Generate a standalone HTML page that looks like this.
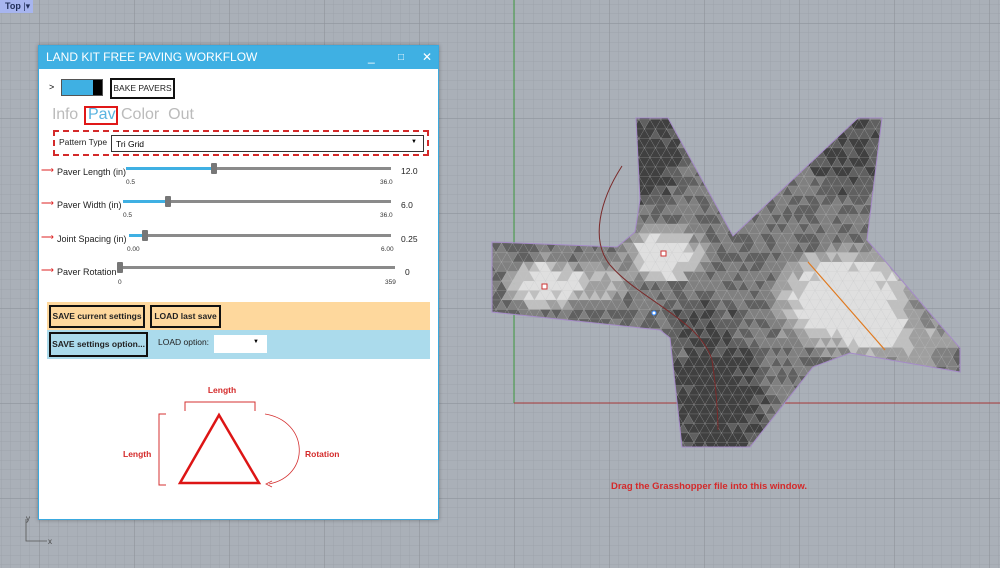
<!DOCTYPE html>
<html><head><meta charset="utf-8"><style>
*{margin:0;padding:0;box-sizing:border-box}
body{width:1000px;height:568px;overflow:hidden;position:relative;font-family:"Liberation Sans",sans-serif;background:#aab0b8}
.abs{position:absolute}
#dlg{left:38px;top:45px;width:401px;height:475px;background:#fff;border:1px solid #3aa9df;box-shadow:0 0 4px rgba(0,0,0,.3)}
#tb{left:0;top:0;width:399px;height:23px;background:#3fb0e3;color:#fff;font-size:12px;line-height:23px;padding-left:7px}
.lbl{font-size:9px;color:#222}
.sm{font-size:6.5px;color:#333}
.track{height:3px;background:#8a8a8a}
.thumb{width:6px;height:11px;background:#777;border-radius:1px}
.arrow{font-size:9px;color:#d22;}
.btn{border:2px solid #111;font-size:8.5px;font-weight:bold;color:#222;text-align:center;white-space:nowrap}
</style></head><body>
<svg class="abs" style="left:0;top:0" width="1000" height="568">
<defs>
<pattern id="mn" x="514" y="403" width="9.5" height="9.5" patternUnits="userSpaceOnUse"><path d="M0 0H9.5M0 0V9.5" stroke="#9ea3ab" stroke-width="1" fill="none"/></pattern>
<pattern id="mj" x="514" y="403" width="95" height="95" patternUnits="userSpaceOnUse"><path d="M0 0H95M0 0V95" stroke="#8e939b" stroke-width="1.2" fill="none"/></pattern>
<clipPath id="star"><path d="M636 118L668 118L733 236L858 118L882 118L867 240L960 348L960 372L850 353L813 367L750 447L682 447L670 338L660 330L492 312L492 242L617 247L635 232L640 200Z"/></clipPath>
</defs>
<rect width="1000" height="568" fill="url(#mn)"/>
<rect width="1000" height="568" fill="url(#mj)"/>
<line x1="514" y1="0" x2="514" y2="403" stroke="#3e9a3e" stroke-width="1"/>
<line x1="514" y1="403" x2="1000" y2="403" stroke="#a83a3a" stroke-width="1"/>
<g clip-path="url(#star)" id="tris"><rect x="480" y="100" width="500" height="360" fill="#6a6a6a"/></g>
<path d="M636 118L668 118L733 236L858 118L882 118L867 240L960 348L960 372L850 353L813 367L750 447L682 447L670 338L660 330L492 312L492 242L617 247L635 232L640 200Z" fill="none" stroke="#a58bc8" stroke-width="1"/>
<path d="M622 166C600 200 590 240 610 265C640 300 700 320 712 360C718 400 718 430 718 430" fill="none" stroke="#7a2a2a" stroke-width="1"/>
<line x1="808" y1="262" x2="885" y2="350" stroke="#e07a20" stroke-width="1.2"/>
<rect x="542" y="284" width="5" height="5" fill="#fff" stroke="#c33"/>
<rect x="661" y="251" width="5" height="5" fill="#fff" stroke="#c33"/>
<circle cx="654" cy="313" r="2" fill="#fff" stroke="#38f"/>
<path d="M26 519V541H47" stroke="#555" fill="none" stroke-width=".8"/>
<text x="26" y="521" font-size="8" fill="#444" font-family="Liberation Sans">y</text>
<text x="48" y="544" font-size="8" fill="#444" font-family="Liberation Sans">x</text>
</svg>
<script>
(function(){
var g=document.getElementById('tris'),s='',seed=7;
function r(){seed=(seed*16807)%2147483647;return seed/2147483647;}
function blob(x,y,cx,cy,rx,ry){var d=((x-cx)/rx)*((x-cx)/rx)+((y-cy)/ry)*((y-cy)/ry);return Math.max(0,1-d);}
var w=11,h=9.5;
for(var j=0;j<38;j++){var y=110+j*h;for(var i=-1;i<47;i++){
 for(var k=0;k<2;k++){
  var off=(j%2)*w/2, x=485+i*w+off+k*w/2;
  var cx=x+w/2, cy=y+h/2;
  var v=0.45;
  v-=0.22*blob(cx,cy,650,150,40,70);
  v-=0.18*blob(cx,cy,850,150,60,60);
  v-=0.25*blob(cx,cy,715,400,60,80);
  v-=0.12*blob(cx,cy,700,320,50,30);
  v+=0.5*blob(cx,cy,545,285,45,30);
  v+=0.55*blob(cx,cy,665,255,45,32);
  v+=0.6*blob(cx,cy,845,300,80,60);
  v+=0.25*blob(cx,cy,900,340,60,30);
  v+=0.22*blob(cx,cy,600,280,40,30);
  v+=(r()-0.5)*0.18;
  v=Math.round(Math.max(0.22,Math.min(0.9,v))*8)/8;
  var c=Math.round(v*255);
  var p=k==0?(x+','+(y+h)+' '+(x+w/2)+','+y+' '+(x+w)+','+(y+h)):(x+','+y+' '+(x+w)+','+y+' '+(x+w/2)+','+(y+h));
  s+='<polygon points="'+p+'" fill="rgb('+c+','+c+','+c+')" stroke="#cfcfcf" stroke-width=".3" stroke-opacity=".45"/>';
 }}}
g.innerHTML=s;
})();
</script>
<div class="abs" style="left:0;top:0;width:33px;height:13px;background:#a7b5ef;font-size:9px;font-weight:bold;color:#22305a;padding:1px 0 0 5px">Top <span style="font-weight:normal">|▾</span></div>
<div class="abs" style="left:611px;top:481px;font-size:9.5px;font-weight:bold;color:#d42a2a">Drag the Grasshopper file into this window.</div>

<div id="dlg" class="abs">
<div id="tb" class="abs">LAND KIT FREE PAVING WORKFLOW<span class="abs" style="left:329px;top:0">_</span><span class="abs" style="left:359px;top:0;font-size:10px">□</span><span class="abs" style="left:383px;top:0">✕</span></div>
<div class="abs" style="left:10px;top:36px;font-size:9px">&gt;</div>
<div class="abs" style="left:22px;top:33px;width:42px;height:17px;border:1px solid #555;background:#3fb0e3"><div class="abs" style="right:0;top:0;width:9px;height:15px;background:#000"></div></div>
<div class="abs btn" style="left:71px;top:32px;width:65px;height:21px;line-height:17px;font-weight:normal;font-size:8.5px">BAKE PAVERS</div>
<div class="abs" style="left:13px;top:60px;font-size:16px;color:#bbb;letter-spacing:-.2px">Info <span style="color:#fff">P</span></div>
<div class="abs" style="left:45px;top:60px;width:34px;height:19px;border:2px solid #e01818"></div>
<div class="abs" style="left:49px;top:60px;font-size:16px;color:#5ab4e0">Pav</div>
<div class="abs" style="left:82px;top:60px;font-size:16px;color:#bbb">Color&nbsp; Out</div>
<div class="abs" style="left:14px;top:84px;width:376px;height:26px;border:2px dashed #d42a2a"></div>
<div class="abs lbl" style="left:20px;top:91px;font-size:8.5px">Pattern Type</div>
<div class="abs" style="left:72px;top:89px;width:313px;height:17px;border:1px solid #333;font-size:8.5px;padding:3px 4px">Tri Grid<span class="abs" style="right:6px;top:3px;font-size:6px">▼</span></div>

<div class="abs arrow" style="left:2px;top:119px">⟶</div>
<div class="abs lbl" style="left:18px;top:121px">Paver Length (in)</div>
<div class="abs track" style="left:87px;top:121px;width:265px"></div><div class="abs" style="left:87px;top:121px;width:87px;height:3px;background:#3fb0e3"></div>
<div class="abs thumb" style="left:172px;top:117px"></div>
<div class="abs sm" style="left:87px;top:133px">0.5</div><div class="abs sm" style="left:341px;top:133px">36.0</div>
<div class="abs lbl" style="left:362px;top:120px;font-size:8.5px">12.0</div>

<div class="abs arrow" style="left:2px;top:152px">⟶</div>
<div class="abs lbl" style="left:18px;top:154px">Paver Width (in)</div>
<div class="abs track" style="left:84px;top:154px;width:268px"></div><div class="abs" style="left:84px;top:154px;width:44px;height:3px;background:#3fb0e3"></div>
<div class="abs thumb" style="left:126px;top:150px"></div>
<div class="abs sm" style="left:84px;top:166px">0.5</div><div class="abs sm" style="left:341px;top:166px">36.0</div>
<div class="abs lbl" style="left:362px;top:154px;font-size:8.5px">6.0</div>

<div class="abs arrow" style="left:2px;top:186px">⟶</div>
<div class="abs lbl" style="left:18px;top:188px">Joint Spacing (in)</div>
<div class="abs track" style="left:90px;top:188px;width:262px"></div><div class="abs" style="left:90px;top:188px;width:14px;height:3px;background:#3fb0e3"></div>
<div class="abs thumb" style="left:103px;top:184px"></div>
<div class="abs sm" style="left:88px;top:200px">0.00</div><div class="abs sm" style="left:342px;top:200px">6.00</div>
<div class="abs lbl" style="left:362px;top:188px;font-size:8.5px">0.25</div>

<div class="abs arrow" style="left:2px;top:219px">⟶</div>
<div class="abs lbl" style="left:18px;top:221px">Paver Rotation</div>
<div class="abs track" style="left:80px;top:220px;width:276px"></div>
<div class="abs thumb" style="left:78px;top:216px"></div>
<div class="abs sm" style="left:79px;top:233px">0</div><div class="abs sm" style="left:346px;top:233px">359</div>
<div class="abs lbl" style="left:366px;top:221px;font-size:8.5px">0</div>

<div class="abs" style="left:8px;top:256px;width:383px;height:28px;background:#fed89d"></div>
<div class="abs btn" style="left:10px;top:259px;width:96px;height:23px;line-height:19px">SAVE current settings</div>
<div class="abs btn" style="left:111px;top:259px;width:71px;height:23px;line-height:19px">LOAD last save</div>
<div class="abs" style="left:8px;top:284px;width:383px;height:29px;background:#abdbec"></div>
<div class="abs btn" style="left:10px;top:286px;width:99px;height:25px;line-height:21px">SAVE settings option...</div>
<div class="abs lbl" style="left:119px;top:291px;font-size:8.5px">LOAD option:</div>
<div class="abs" style="left:175px;top:289px;width:53px;height:18px;background:#fff"><span class="abs" style="right:8px;top:4px;font-size:6px">▼</span></div>

<svg class="abs" style="left:0;top:320px" width="399" height="160">
<text x="183" y="27" font-size="8.5" fill="#d42a2a" font-weight="bold" font-family="Liberation Sans" text-anchor="middle">Length</text>
<path d="M146 45V36H216V45" stroke="#d43030" fill="none" stroke-width="1"/>
<path d="M127 48H120V119H127" stroke="#d43030" fill="none" stroke-width="1"/>
<text x="84" y="91" font-size="8.5" fill="#d42a2a" font-weight="bold" font-family="Liberation Sans">Length</text>
<path d="M180 49L220 117H141Z" stroke="#dd1515" stroke-width="2.5" fill="none"/>
<path d="M226 48C270 55 272 110 230 118" stroke="#d43030" fill="none" stroke-width=".8"/>
<path d="M233 115L227 118L233 121" stroke="#d43030" fill="none" stroke-width=".8"/>
<text x="266" y="91" font-size="8.5" fill="#d42a2a" font-weight="bold" font-family="Liberation Sans">Rotation</text>
</svg>
</div>
</body></html>
